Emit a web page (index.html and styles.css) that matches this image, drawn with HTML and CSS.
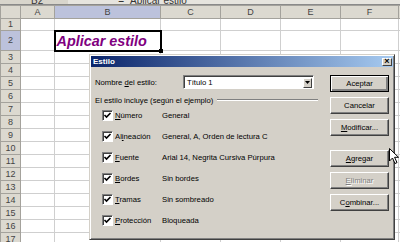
FILE: index.html
```html
<!DOCTYPE html>
<html lang="es">
<head>
  <meta charset="UTF-8" />
  <title>Estilo</title>
  <link rel="stylesheet" href="styles.css">
</head>
<body>
  <div class="screen">
    <div class="formula-bar">
      <span class="name-box">B2</span>
      <div class="formula-field">
        <span class="fx">=</span>
        <span class="formula">Aplicar estilo</span>
      </div>
    </div>

    <table class="sheet">
      <colgroup>
        <col class="c-hdr"><col class="c-a"><col class="c-b"><col class="c-n"><col class="c-n"><col class="c-n"><col class="c-f"><col class="c-g">
      </colgroup>
      <tr class="r-hdr"><th></th><th>A</th><th class="hl">B</th><th>C</th><th>D</th><th>E</th><th>F</th><th></th></tr>
      <tr class="r-1"><th>1</th><td></td><td></td><td></td><td></td><td></td><td></td><td></td></tr>
      <tr class="r-2"><th class="hl">2</th><td></td><td class="sel"><span class="big">Aplicar estilo</span></td><td></td><td></td><td></td><td></td><td></td></tr>
      <tr><th>3</th><td></td><td></td><td></td><td></td><td></td><td></td><td></td></tr>
      <tr><th>4</th><td></td><td></td><td></td><td></td><td></td><td></td><td></td></tr>
      <tr><th>5</th><td></td><td></td><td></td><td></td><td></td><td></td><td></td></tr>
      <tr><th>6</th><td></td><td></td><td></td><td></td><td></td><td></td><td></td></tr>
      <tr><th>7</th><td></td><td></td><td></td><td></td><td></td><td></td><td></td></tr>
      <tr><th>8</th><td></td><td></td><td></td><td></td><td></td><td></td><td></td></tr>
      <tr><th>9</th><td></td><td></td><td></td><td></td><td></td><td></td><td></td></tr>
      <tr><th>10</th><td></td><td></td><td></td><td></td><td></td><td></td><td></td></tr>
      <tr><th>11</th><td></td><td></td><td></td><td></td><td></td><td></td><td></td></tr>
      <tr><th>12</th><td></td><td></td><td></td><td></td><td></td><td></td><td></td></tr>
      <tr><th>13</th><td></td><td></td><td></td><td></td><td></td><td></td><td></td></tr>
      <tr><th>14</th><td></td><td></td><td></td><td></td><td></td><td></td><td></td></tr>
      <tr><th>15</th><td></td><td></td><td></td><td></td><td></td><td></td><td></td></tr>
      <tr><th>16</th><td></td><td></td><td></td><td></td><td></td><td></td><td></td></tr>
      <tr><th>17</th><td></td><td></td><td></td><td></td><td></td><td></td><td></td></tr>
    </table>

    <div class="dialog">
      <div class="titlebar">
        <span class="title">Estilo</span>
        <span class="close">&times;</span>
      </div>
      <div class="dlg-body">
        <div class="main">
          <div class="name-row">
            <span class="name-label">Nombre <u>d</u>el estilo:</span>
            <div class="combo">
              <span class="combo-text">Título 1</span>
              <span class="combo-btn">
                <svg width="5" height="3" viewBox="0 0 5 3"><path d="M0 0H5L2.5 3Z" fill="#000"/></svg>
              </span>
            </div>
          </div>

          <div class="group-title">
            <span>El estilo incluye (según el ejemplo)</span>
            <span class="rule"></span>
          </div>

          <div class="opt">
            <span class="check"><svg width="9" height="9" viewBox="0 0 9 9"><polyline points="1.5,4 3.5,6 7.5,2" fill="none" stroke="#000" stroke-width="1.6"/></svg></span>
            <span class="opt-name"><u>N</u>úmero</span>
            <span class="opt-val">General</span>
          </div>
          <div class="opt">
            <span class="check"><svg width="9" height="9" viewBox="0 0 9 9"><polyline points="1.5,4 3.5,6 7.5,2" fill="none" stroke="#000" stroke-width="1.6"/></svg></span>
            <span class="opt-name">Al<u>i</u>neación</span>
            <span class="opt-val">General, A, Orden de lectura C</span>
          </div>
          <div class="opt">
            <span class="check"><svg width="9" height="9" viewBox="0 0 9 9"><polyline points="1.5,4 3.5,6 7.5,2" fill="none" stroke="#000" stroke-width="1.6"/></svg></span>
            <span class="opt-name"><u>F</u>uente</span>
            <span class="opt-val">Arial 14, Negrita Cursiva Púrpura</span>
          </div>
          <div class="opt">
            <span class="check"><svg width="9" height="9" viewBox="0 0 9 9"><polyline points="1.5,4 3.5,6 7.5,2" fill="none" stroke="#000" stroke-width="1.6"/></svg></span>
            <span class="opt-name"><u>B</u>ordes</span>
            <span class="opt-val">Sin bordes</span>
          </div>
          <div class="opt">
            <span class="check"><svg width="9" height="9" viewBox="0 0 9 9"><polyline points="1.5,4 3.5,6 7.5,2" fill="none" stroke="#000" stroke-width="1.6"/></svg></span>
            <span class="opt-name"><u>T</u>ramas</span>
            <span class="opt-val">Sin sombreado</span>
          </div>
          <div class="opt">
            <span class="check"><svg width="9" height="9" viewBox="0 0 9 9"><polyline points="1.5,4 3.5,6 7.5,2" fill="none" stroke="#000" stroke-width="1.6"/></svg></span>
            <span class="opt-name"><u>P</u>rotección</span>
            <span class="opt-val">Bloqueada</span>
          </div>
        </div>

        <div class="buttons">
          <button class="btn default">Aceptar</button>
          <button class="btn">Cancelar</button>
          <button class="btn"><u>M</u>odificar...</button>
          <button class="btn spaced"><u>A</u>gregar</button>
          <button class="btn" disabled><u>E</u>liminar</button>
          <button class="btn">C<u>o</u>mbinar...</button>
        </div>
      </div>
    </div>

    <svg class="cursor" width="11" height="17" viewBox="0 0 11 17">
      <path d="M0.5 0.5V13L3.5 10L6 15.5L8 14.6L5.6 9.3H9.5Z" fill="#fff" stroke="#000" stroke-width="1"/>
    </svg>
  </div>
</body>
</html>
```

FILE: styles.css
```css
* {
  box-sizing: border-box;
}
body {
  margin: 0;
  font-family: "Liberation Sans", Arial, sans-serif;
  background: #fff;
}
.screen {
  position: relative;
  width: 400px;
  height: 242px;
  overflow: hidden;
}

/* formula bar, only its bottom edge is visible */
.formula-bar {
  height: 5px;
  background: #d8d5cc;
  border-bottom: 1px solid #8a8a8a;
  display: flex;
  align-items: flex-end;
  overflow: hidden;
  font-size: 10px;
  color: #333;
}
.formula-bar span {
  line-height: 10px;
  margin-bottom: -2px;
}
.name-box {
  margin-left: 31px;
}
.formula-field {
  display: flex;
  align-items: flex-end;
  align-self: stretch;
  flex: 1;
  margin-left: 25px;
  background: #e6e4de;
}
.fx {
  margin-left: 50px;
}
.formula {
  margin-left: 6px;
}

/* spreadsheet */
.sheet {
  border-collapse: collapse;
  table-layout: fixed;
  width: 400px;
}
.c-hdr { width: 20px; }
.c-a { width: 34px; }
.c-b { width: 106px; }
.c-n { width: 60px; }
.c-f { width: 58px; }
.c-g { width: 2px; }
.sheet tr {
  height: 13px;
}
.sheet tr.r-1 {
  height: 12px;
}
.sheet tr.r-2 {
  height: 18px;
}
.sheet th,
.sheet td {
  padding: 0;
  border: 1px solid #cfcfcf;
}
.sheet th {
  background: #dcd9d0;
  border-color: #a4a29c;
  font-weight: normal;
  font-size: 9px;
  color: #444;
  text-align: center;
  line-height: 11px;
}
.sheet th.hl {
  background: #bcc2dc;
}
.sheet td.sel {
  position: relative;
  border: 2px solid #000;
  overflow: visible;
  white-space: nowrap;
}
.sheet td.sel::after {
  content: "";
  position: absolute;
  right: -3px;
  bottom: -3px;
  width: 4px;
  height: 4px;
  background: #000;
}
.big {
  padding-left: 1px;
  font-size: 14.4px;
  font-weight: bold;
  font-style: italic;
  color: #800080;
}

/* dialog */
.dialog {
  position: absolute;
  left: 89px;
  top: 54px;
  width: 306px;
  height: 186px;
  padding: 1px;
  background: #d4d0c8;
  border: 1px solid;
  border-color: #d4d0c8 #404040 #404040 #d4d0c8;
  box-shadow: inset 1px 1px #fff, inset -1px -1px #808080;
  font-size: 7.7px;
  color: #000;
}
.titlebar {
  height: 11px;
  background: linear-gradient(to right, #0a246a, #a6caf0);
  display: flex;
  align-items: center;
  justify-content: space-between;
  padding: 0 1px 0 2px;
}
.title {
  color: #fff;
  font-weight: bold;
  font-size: 8px;
}
.close {
  width: 10px;
  height: 8px;
  background: #d4d0c8;
  border: 1px solid;
  border-color: #fff #404040 #404040 #fff;
  font-size: 9px;
  line-height: 5px;
  text-align: center;
  font-weight: bold;
}
.dlg-body {
  display: flex;
  justify-content: space-between;
  padding: 8px 4px 0 4px;
}
.main {
  width: 223px;
}
.name-row {
  display: flex;
  align-items: center;
  height: 14px;
}
.name-label {
  width: 88px;
}
.combo {
  width: 131px;
  height: 14px;
  background: #fff;
  border: 1px solid;
  border-color: #808080 #fff #fff #808080;
  box-shadow: inset 1px 1px #404040;
  display: flex;
  align-items: center;
  justify-content: space-between;
  padding: 1px 1px 0 3px;
}
.combo-btn {
  width: 9px;
  height: 10px;
  background: #d4d0c8;
  border: 1px solid;
  border-color: #fff #404040 #404040 #fff;
  display: flex;
  align-items: center;
  justify-content: center;
}
.group-title {
  display: flex;
  align-items: center;
  height: 10px;
  margin-top: 6px;
}
.rule {
  flex: 1;
  margin-left: 4px;
  border-top: 1px solid #808080;
  border-bottom: 1px solid #fff;
}
.opt {
  display: flex;
  align-items: center;
  height: 21px;
}
.check {
  width: 11px;
  height: 11px;
  margin-left: 7px;
  background: #fff;
  border: 1px solid;
  border-color: #808080 #fff #fff #808080;
  box-shadow: inset 1px 1px #404040;
  display: flex;
  align-items: center;
  justify-content: center;
}
.opt-name {
  width: 47px;
  margin-left: 2px;
}
.buttons {
  display: flex;
  flex-direction: column;
  gap: 5px;
  width: 59px;
}
.btn {
  height: 17px;
  padding: 0;
  background: #d4d0c8;
  border: 1px solid;
  border-color: #fff #404040 #404040 #fff;
  box-shadow: inset -1px -1px #808080;
  font-family: inherit;
  font-size: 7.7px;
  color: #000;
}
.btn.default {
  border: 1px solid #000;
  box-shadow: inset 1px 1px #fff, inset -2px -2px #808080;
}
.btn.spaced {
  margin-top: 9px;
}
.btn:disabled {
  color: #808080;
  text-shadow: 1px 1px #fff;
}
.cursor {
  position: absolute;
  left: 389px;
  top: 148px;
}
```
